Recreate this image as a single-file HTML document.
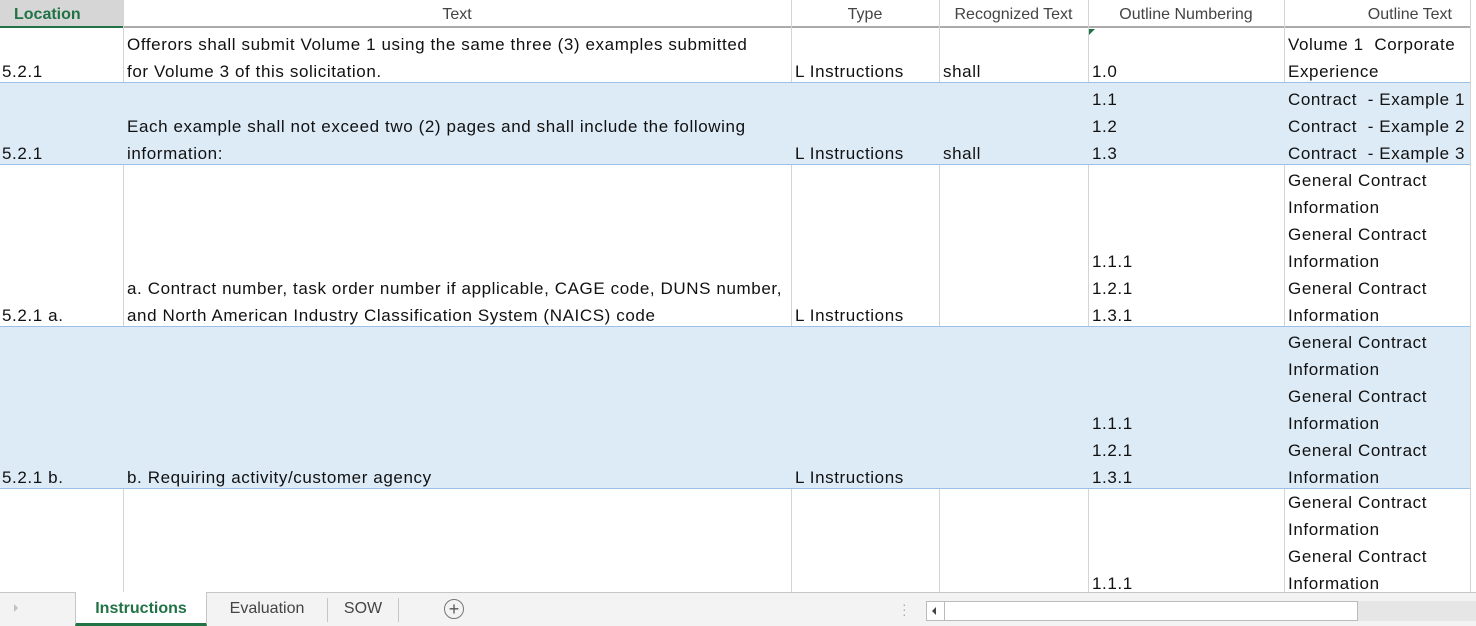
<!DOCTYPE html>
<html><head><style>
body{margin:0;width:1476px;height:626px;overflow:hidden;background:#fff;font-family:"Liberation Sans",Arial,sans-serif;position:relative}
.a{position:absolute}
.hdr{top:0;height:28px;border-bottom:2px solid #ababab;box-sizing:border-box;color:#444;font-size:16px;line-height:30px;text-align:center}
.vl{position:absolute;width:1px;background:#d4d4d4}
.row{position:absolute;left:0;width:1470px;border-bottom:1px solid #9bc2e6;box-sizing:border-box}
.blue{background:#ddebf7}
.c{position:absolute;bottom:-3px;font-size:17px;line-height:27px;color:#111;white-space:nowrap;letter-spacing:0.6px}
</style></head><body>
<div class="a hdr" style="left:0;width:123px;background:#d6d6d6;color:#217346;font-weight:bold;border-bottom:2px solid #217346;text-align:left;padding-left:14px">Location</div>
<div class="a hdr" style="left:123px;width:668px">Text</div>
<div class="a hdr" style="left:791px;width:148px">Type</div>
<div class="a hdr" style="left:939px;width:149px">Recognized Text</div>
<div class="a hdr" style="left:1088px;width:196px">Outline Numbering</div>
<div class="a hdr" style="left:1284px;width:186px;text-align:right;padding-right:18px;box-sizing:border-box">Outline Text</div>
<div class="vl" style="left:123px;top:0;height:592px"></div>
<div class="vl" style="left:791px;top:0;height:592px"></div>
<div class="vl" style="left:939px;top:0;height:592px"></div>
<div class="vl" style="left:1088px;top:0;height:592px"></div>
<div class="vl" style="left:1284px;top:0;height:592px"></div>
<div class="vl" style="left:1470px;top:0;height:592px"></div>

<div class="row" style="top:28px;height:55px">
<div class="c" style="left:2px">5.2.1</div>
<div class="c" style="left:127px">Offerors shall submit Volume 1 using the same three (3) examples submitted<br>for Volume 3 of this solicitation.</div>
<div class="c" style="left:795px">L Instructions</div>
<div class="c" style="left:943px">shall</div>
<div class="c" style="left:1092px">1.0</div>
<div class="c" style="left:1288px">Volume 1&nbsp; Corporate<br>Experience</div>
</div>
<div class="a" style="left:1089px;top:29px;width:0;height:0;border-top:6px solid #217346;border-right:6px solid transparent"></div>
<div class="row blue" style="top:83px;height:82px">
<div class="c" style="left:2px">5.2.1</div>
<div class="c" style="left:127px">Each example shall not exceed two (2) pages and shall include the following<br>information:</div>
<div class="c" style="left:795px">L Instructions</div>
<div class="c" style="left:943px">shall</div>
<div class="c" style="left:1092px">1.1<br>1.2<br>1.3</div>
<div class="c" style="left:1288px">Contract&nbsp; - Example 1<br>Contract&nbsp; - Example 2<br>Contract&nbsp; - Example 3</div>
</div>
<div class="row" style="top:165px;height:162px">
<div class="c" style="left:2px">5.2.1 a.</div>
<div class="c" style="left:127px">a. Contract number, task order number if applicable, CAGE code, DUNS number,<br>and North American Industry Classification System (NAICS) code</div>
<div class="c" style="left:795px">L Instructions</div>
<div class="c" style="left:1092px">1.1.1<br>1.2.1<br>1.3.1</div>
<div class="c" style="left:1288px">General Contract<br>Information<br>General Contract<br>Information<br>General Contract<br>Information</div>
</div>
<div class="row blue" style="top:327px;height:162px">
<div class="c" style="left:2px">5.2.1 b.</div>
<div class="c" style="left:127px">b. Requiring activity/customer agency</div>
<div class="c" style="left:795px">L Instructions</div>
<div class="c" style="left:1092px">1.1.1<br>1.2.1<br>1.3.1</div>
<div class="c" style="left:1288px">General Contract<br>Information<br>General Contract<br>Information<br>General Contract<br>Information</div>
</div>
<div class="a" style="left:0;top:489px;width:1470px;height:103px;overflow:hidden">
<div class="c" style="left:1092px;bottom:auto;top:81px">1.1.1</div>
<div class="c" style="left:1288px;bottom:auto;top:0">General Contract<br>Information<br>General Contract<br>Information</div>
</div>
<div class="a" style="left:0;top:592px;width:1476px;height:34px;background:#f3f3f3;border-top:1px solid #c6c6c6;box-sizing:border-box"></div>
<div class="a" style="left:14px;top:604px;width:0;height:0;border-left:4px solid #c0c0c0;border-top:4px solid transparent;border-bottom:4px solid transparent"></div>
<div class="a" style="left:75px;top:592px;width:132px;height:34px;background:#fff;border-left:1px solid #c6c6c6;border-right:1px solid #c6c6c6;border-bottom:3px solid #217346;box-sizing:border-box;text-align:center;font-weight:bold;color:#217346;font-size:16px;line-height:34px">Instructions</div>
<div class="a" style="left:208px;top:592px;width:118px;text-align:center;font-size:16px;line-height:34px;color:#444">Evaluation</div>
<div class="a" style="left:327px;top:598px;width:1px;height:24px;background:#c6c6c6"></div>
<div class="a" style="left:328px;top:592px;width:70px;text-align:center;font-size:16px;line-height:34px;color:#444">SOW</div>
<div class="a" style="left:398px;top:598px;width:1px;height:24px;background:#c6c6c6"></div>
<div class="a" style="left:444px;top:599px;width:18px;height:18px;border:1.5px solid #777;border-radius:50%;text-align:center;line-height:18px;font-size:18px;color:#555">+</div>
<div class="a" style="left:902px;top:602px;color:#aaa;font-size:14px;line-height:5px">·<br>·<br>·</div>
<div class="a" style="left:926px;top:601px;width:432px;height:20px;background:#fff;border:1px solid #bbb;box-sizing:border-box"></div>
<div class="a" style="left:926px;top:601px;width:19px;height:20px;border:1px solid #bbb;box-sizing:border-box;background:#fff"></div>
<div class="a" style="left:932px;top:607px;width:0;height:0;border-right:4px solid #444;border-top:4px solid transparent;border-bottom:4px solid transparent"></div>
<div class="a" style="left:1358px;top:601px;width:118px;height:20px;background:#e6e6e6"></div>
</body></html>
